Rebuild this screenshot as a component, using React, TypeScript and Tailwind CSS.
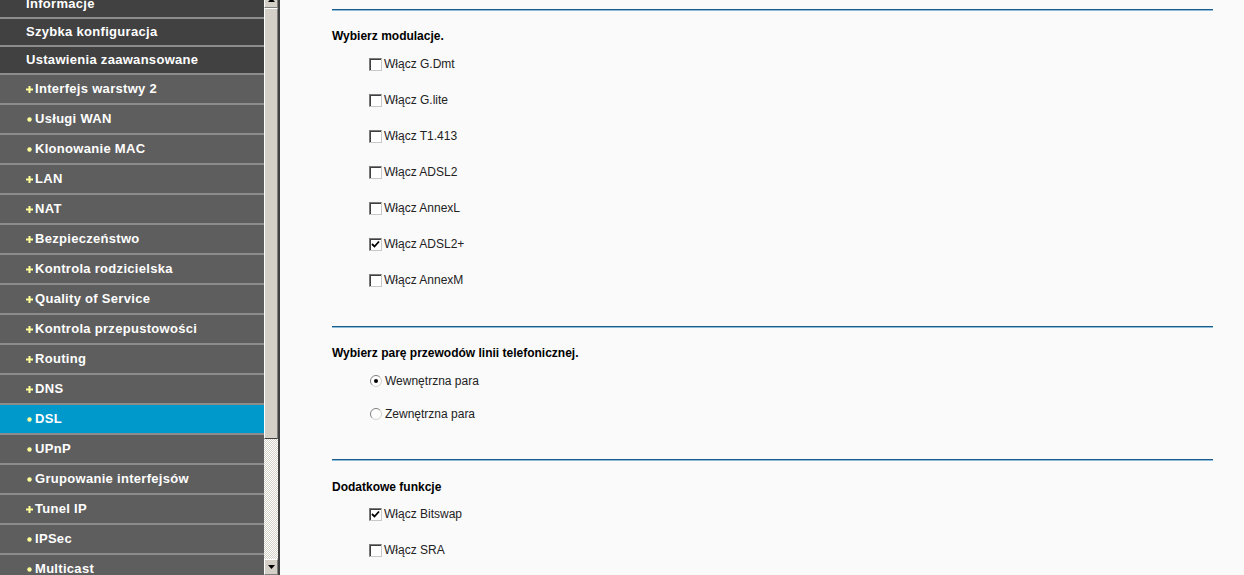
import React from 'react';

type MenuItem = { label: string; kind: 'plus' | 'dot'; active?: boolean };

const topItems = ['Informacje', 'Szybka konfiguracja', 'Ustawienia zaawansowane'];

const subItems: MenuItem[] = [
  { label: 'Interfejs warstwy 2', kind: 'plus' },
  { label: 'Usługi WAN', kind: 'dot' },
  { label: 'Klonowanie MAC', kind: 'dot' },
  { label: 'LAN', kind: 'plus' },
  { label: 'NAT', kind: 'plus' },
  { label: 'Bezpieczeństwo', kind: 'plus' },
  { label: 'Kontrola rodzicielska', kind: 'plus' },
  { label: 'Quality of Service', kind: 'plus' },
  { label: 'Kontrola przepustowości', kind: 'plus' },
  { label: 'Routing', kind: 'plus' },
  { label: 'DNS', kind: 'plus' },
  { label: 'DSL', kind: 'dot', active: true },
  { label: 'UPnP', kind: 'dot' },
  { label: 'Grupowanie interfejsów', kind: 'dot' },
  { label: 'Tunel IP', kind: 'plus' },
  { label: 'IPSec', kind: 'dot' },
  { label: 'Multicast', kind: 'dot' },
];

function Marker({ kind }: { kind: 'plus' | 'dot' }) {
  if (kind === 'plus') {
    return (
      <svg width="7" height="7" viewBox="0 0 7 7" className="shrink-0">
        <rect x="0" y="2.5" width="7" height="2" fill="#ffff99" />
        <rect x="2.5" y="0" width="2" height="7" fill="#ffff99" />
      </svg>
    );
  }
  return (
    <svg width="7" height="7" viewBox="0 0 7 7" className="shrink-0">
      <circle cx="3.5" cy="3.5" r="2.2" fill="#ffff99" />
    </svg>
  );
}

function Checkbox({ checked }: { checked?: boolean }) {
  return (
    <span className="w-[13px] h-[13px] bg-white border border-[#7a7a7a] border-r-[#c8c8c8] border-b-[#c8c8c8] shadow-[inset_1px_1px_0_#404040] flex items-center justify-center shrink-0">
      {checked && (
        <svg width="9" height="9" viewBox="0 0 9 9">
          <path d="M1 4 L3.5 6.5 L8 1.5" stroke="#000" strokeWidth="1.8" fill="none" />
        </svg>
      )}
    </span>
  );
}

function Radio({ checked }: { checked?: boolean }) {
  return (
    <svg width="12" height="12" viewBox="0 0 12 12" className="shrink-0">
      <circle cx="6" cy="6" r="5.5" fill="#fff" />
      <path d="M2.1 9.9 A5.5 5.5 0 0 1 9.9 2.1" stroke="#808080" strokeWidth="1" fill="none" />
      <path d="M9.9 2.1 A5.5 5.5 0 0 1 2.1 9.9" stroke="#d4d0c8" strokeWidth="1" fill="none" />
      {checked && <circle cx="6" cy="6" r="2" fill="#000" />}
    </svg>
  );
}

function Divider() {
  return (
    <div className="w-[881px] flex flex-col">
      <div className="h-[1px] bg-[#1a5c8c]" />
      <div className="h-[1px] bg-[#8fbcd9]" />
    </div>
  );
}

function CheckRow({ label, checked }: { label: string; checked?: boolean }) {
  return (
    <div className="h-[36px] flex items-center gap-[2px] pl-[37px]">
      <Checkbox checked={checked} />
      <span className="text-[12px] text-[#222]">{label}</span>
    </div>
  );
}

function RadioRow({ label, checked }: { label: string; checked?: boolean }) {
  return (
    <div className="h-[33px] flex items-center gap-[3px] pl-[38px]">
      <Radio checked={checked} />
      <span className="text-[12px] text-[#222]">{label}</span>
    </div>
  );
}

export default function App() {
  return (
    <div
      className="w-[1244px] h-[575px] flex overflow-hidden bg-[#fafafa]"
      style={{ fontFamily: '"Liberation Sans", Arial, sans-serif' }}
    >
      {/* Sidebar menu */}
      <div className="w-[264px] h-full overflow-hidden shrink-0 bg-[#5e5e5e]">
        <div className="mt-[-9px] flex flex-col">
          {topItems.map((t) => (
            <div
              key={t}
              className="h-[28px] bg-[#414141] border-b-2 border-[#8c8c8c] flex items-center pl-[26px] text-white font-bold text-[13px] tracking-[0.3px]"
            >
              {t}
            </div>
          ))}
          {subItems.map((item) => (
            <div
              key={item.label}
              className={`h-[30px] border-b-2 border-[#8c8c8c] flex items-center pl-[26px] gap-[2px] text-white font-bold text-[13px] tracking-[0.3px] ${
                item.active ? 'bg-[#0099cc]' : 'bg-[#5e5e5e]'
              }`}
            >
              <Marker kind={item.kind} />
              <span>{item.label}</span>
            </div>
          ))}
        </div>
      </div>

      {/* Scrollbar */}
      <div className="w-[16px] h-full shrink-0 flex flex-col border-r-2 border-[#404040] bg-[repeating-conic-gradient(#d4d0c8_0_25%,#ffffff_0_50%)] bg-[length:2px_2px]">
        <div className="h-[16px] mt-[-8px] bg-[#d4d0c8] border-t border-l border-white border-r border-b border-r-[#808080] border-b-[#808080] flex items-center justify-center">
          <svg width="7" height="4" viewBox="0 0 7 4">
            <path d="M0 4 L3.5 0 L7 4 Z" fill="#000" />
          </svg>
        </div>
        <div className="h-[431px] bg-[#d4d0c8] border-t border-l border-white border-r border-b border-r-[#808080] border-b-[#404040]" />
        <div className="flex-1" />
        <div className="h-[16px] bg-[#d4d0c8] border-t border-l border-white border-r border-b border-r-[#808080] border-b-[#808080] flex items-center justify-center">
          <svg width="7" height="4" viewBox="0 0 7 4">
            <path d="M0 0 L7 0 L3.5 4 Z" fill="#000" />
          </svg>
        </div>
      </div>

      {/* Content */}
      <div className="flex-1 pl-[52px] pt-[9px] flex flex-col text-black">
        <Divider />
        <div className="mt-[18px] h-[14px] leading-[14px] text-[12px] font-bold">Wybierz modulacje.</div>
        <div className="mt-[3px] flex flex-col">
          <CheckRow label="Włącz G.Dmt" />
          <CheckRow label="Włącz G.lite" />
          <CheckRow label="Włącz T1.413" />
          <CheckRow label="Włącz ADSL2" />
          <CheckRow label="Włącz AnnexL" />
          <CheckRow label="Włącz ADSL2+" checked />
          <CheckRow label="Włącz AnnexM" />
        </div>

        <div className="mt-[28px]">
          <Divider />
        </div>
        <div className="mt-[18px] h-[14px] leading-[14px] text-[12px] font-bold">
          Wybierz parę przewodów linii telefonicznej.
        </div>
        <div className="mt-[4px] flex flex-col">
          <RadioRow label="Wewnętrzna para" checked />
          <RadioRow label="Zewnętrzna para" />
        </div>

        <div className="mt-[29px]">
          <Divider />
        </div>
        <div className="mt-[19px] h-[14px] leading-[14px] text-[12px] font-bold">Dodatkowe funkcje</div>
        <div className="mt-[2px] flex flex-col">
          <CheckRow label="Włącz Bitswap" checked />
          <CheckRow label="Włącz SRA" />
        </div>
      </div>
    </div>
  );
}
